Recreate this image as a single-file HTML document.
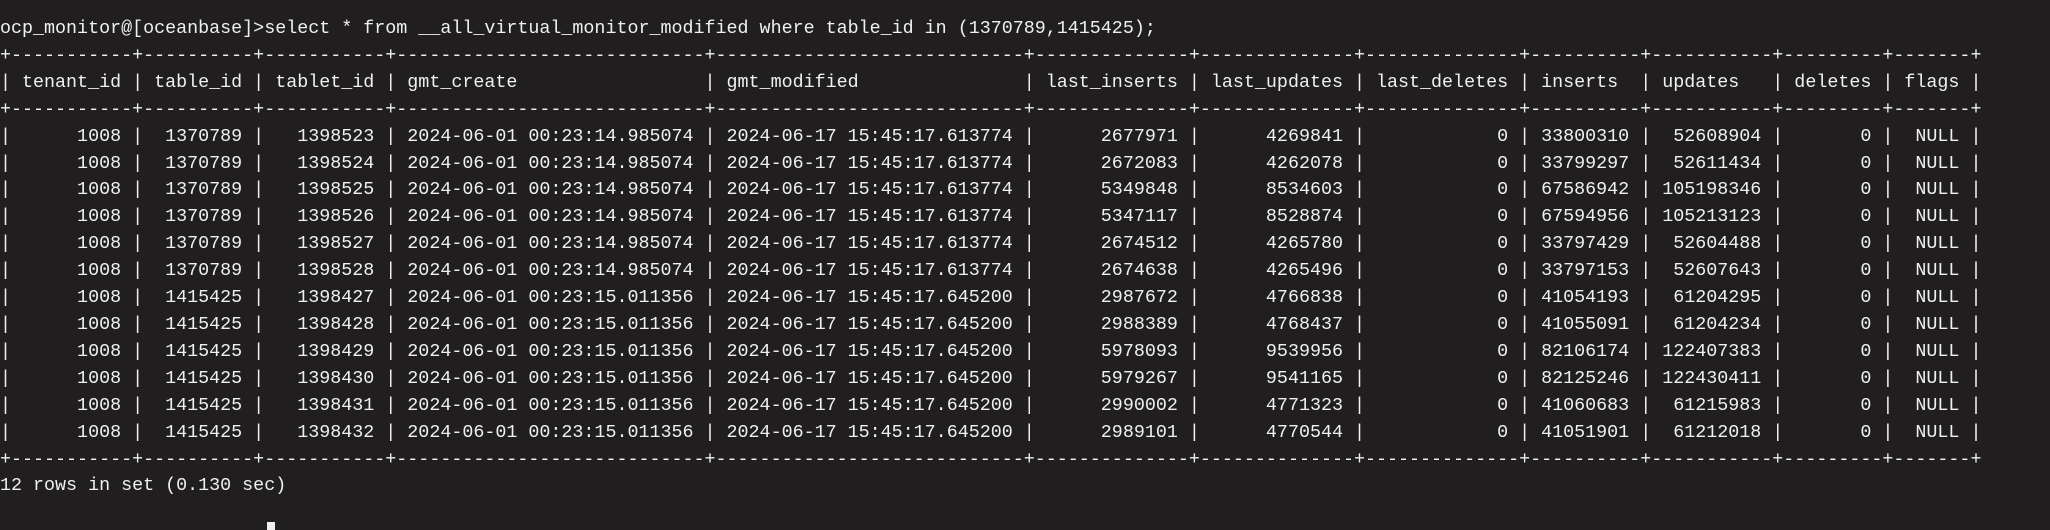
<!DOCTYPE html>
<html><head><meta charset="utf-8"><style>
html,body{margin:0;padding:0;width:2050px;height:530px;background:#201e1e;overflow:hidden}
pre{position:absolute;left:0;top:16px;margin:0;font-family:"Liberation Mono",monospace;font-size:18.35px;line-height:26.9px;color:#f0f0f0;white-space:pre}
.cur{position:absolute;left:267px;top:522px;width:8px;height:8px;background:#eee}
</style></head><body>
<pre>ocp_monitor@[oceanbase]>select * from __all_virtual_monitor_modified where table_id in (1370789,1415425);
+-----------+----------+-----------+----------------------------+----------------------------+--------------+--------------+--------------+----------+-----------+---------+-------+
| tenant_id | table_id | tablet_id | gmt_create                 | gmt_modified               | last_inserts | last_updates | last_deletes | inserts  | updates   | deletes | flags |
+-----------+----------+-----------+----------------------------+----------------------------+--------------+--------------+--------------+----------+-----------+---------+-------+
|      1008 |  1370789 |   1398523 | 2024-06-01 00:23:14.985074 | 2024-06-17 15:45:17.613774 |      2677971 |      4269841 |            0 | 33800310 |  52608904 |       0 |  NULL |
|      1008 |  1370789 |   1398524 | 2024-06-01 00:23:14.985074 | 2024-06-17 15:45:17.613774 |      2672083 |      4262078 |            0 | 33799297 |  52611434 |       0 |  NULL |
|      1008 |  1370789 |   1398525 | 2024-06-01 00:23:14.985074 | 2024-06-17 15:45:17.613774 |      5349848 |      8534603 |            0 | 67586942 | 105198346 |       0 |  NULL |
|      1008 |  1370789 |   1398526 | 2024-06-01 00:23:14.985074 | 2024-06-17 15:45:17.613774 |      5347117 |      8528874 |            0 | 67594956 | 105213123 |       0 |  NULL |
|      1008 |  1370789 |   1398527 | 2024-06-01 00:23:14.985074 | 2024-06-17 15:45:17.613774 |      2674512 |      4265780 |            0 | 33797429 |  52604488 |       0 |  NULL |
|      1008 |  1370789 |   1398528 | 2024-06-01 00:23:14.985074 | 2024-06-17 15:45:17.613774 |      2674638 |      4265496 |            0 | 33797153 |  52607643 |       0 |  NULL |
|      1008 |  1415425 |   1398427 | 2024-06-01 00:23:15.011356 | 2024-06-17 15:45:17.645200 |      2987672 |      4766838 |            0 | 41054193 |  61204295 |       0 |  NULL |
|      1008 |  1415425 |   1398428 | 2024-06-01 00:23:15.011356 | 2024-06-17 15:45:17.645200 |      2988389 |      4768437 |            0 | 41055091 |  61204234 |       0 |  NULL |
|      1008 |  1415425 |   1398429 | 2024-06-01 00:23:15.011356 | 2024-06-17 15:45:17.645200 |      5978093 |      9539956 |            0 | 82106174 | 122407383 |       0 |  NULL |
|      1008 |  1415425 |   1398430 | 2024-06-01 00:23:15.011356 | 2024-06-17 15:45:17.645200 |      5979267 |      9541165 |            0 | 82125246 | 122430411 |       0 |  NULL |
|      1008 |  1415425 |   1398431 | 2024-06-01 00:23:15.011356 | 2024-06-17 15:45:17.645200 |      2990002 |      4771323 |            0 | 41060683 |  61215983 |       0 |  NULL |
|      1008 |  1415425 |   1398432 | 2024-06-01 00:23:15.011356 | 2024-06-17 15:45:17.645200 |      2989101 |      4770544 |            0 | 41051901 |  61212018 |       0 |  NULL |
+-----------+----------+-----------+----------------------------+----------------------------+--------------+--------------+--------------+----------+-----------+---------+-------+
12 rows in set (0.130 sec)</pre>
<div class="cur"></div>
</body></html>
